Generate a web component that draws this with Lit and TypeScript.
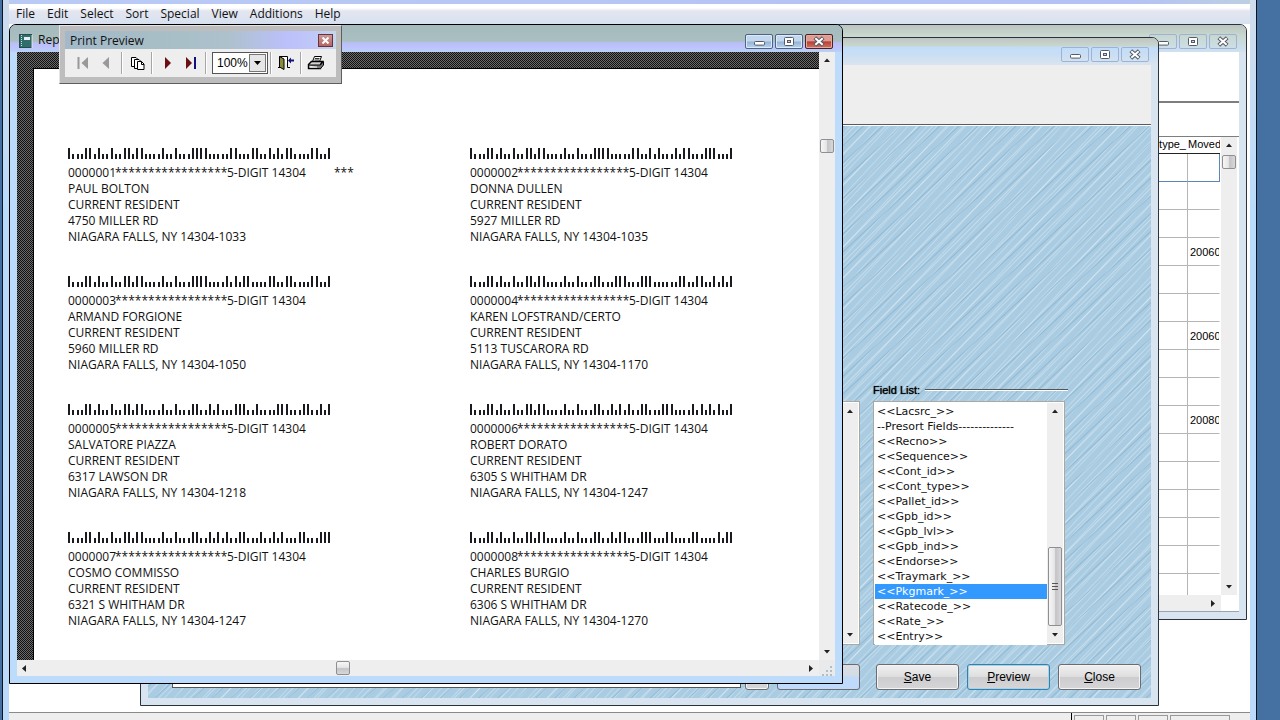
import { LitElement, html, css, svg, nothing } from "lit";
import { customElement, property } from "lit/decorators.js";
import { classMap } from "lit/directives/class-map.js";
import { styleMap } from "lit/directives/style-map.js";

/* ---------- Window caption buttons ---------- */

@customElement("caption-buttons")
class CaptionButtons extends LitElement {
  @property({ type: Boolean }) active = false;

  static styles = css`
    :host { display: flex; gap: 2px; }
    .btn {
      width: 28px; height: 15px; padding: 0; box-sizing: border-box;
      display: flex; align-items: center; justify-content: center;
      border: 1px solid #9db3d6; border-radius: 2px;
      background: transparent;
    }
    .active {
      border-color: #4d6480;
      background: linear-gradient(#c3d8ee 0 48%, #94b2d2 52%, #b5d3f2);
      box-shadow: inset 0 0 0 1px #dbe9f8;
    }
    .close {
      border-color: #4d2027;
      background: linear-gradient(#dd9d92 0 46%, #b93f32 52%, #cf7463);
      box-shadow: inset 0 0 0 1px #e3aaa2;
    }
  `;

  render() {
    const kind = (close: boolean) => classMap({ btn: true, active: this.active && !close, close: this.active && close });
    return html`
      <button class=${kind(false)} aria-label="Minimize">
        <svg width="14" height="11"><rect x="2.5" y="5.5" width="10" height="3.6" rx="1" fill="#fff" stroke="#545a66" /></svg>
      </button>
      <button class=${kind(false)} aria-label="Maximize">
        <svg width="14" height="11">
          <rect x="2.5" y="1.5" width="9" height="8" rx="1" fill="#fff" stroke="#545a66" />
          <rect x="5.5" y="4.5" width="3" height="2" fill="#c3d3e8" stroke="#545a66" />
        </svg>
      </button>
      <button class=${kind(true)} aria-label="Close">
        <svg width="14" height="11">
          <path d="M2.8 1.8L11.2 9.2M11.2 1.8L2.8 9.2" stroke="#545a66" stroke-width="4" />
          <path d="M3.3 2.3L10.7 8.7M10.7 2.3L3.3 8.7" stroke="#fff" stroke-width="2" />
        </svg>
      </button>
    `;
  }
}

/* ---------- Scroll bar ---------- */

@customElement("scroll-strip")
class ScrollStrip extends LitElement {
  @property({ type: Boolean, reflect: true }) horizontal = false;
  @property({ type: Boolean }) grip = false;
  /** Share of the free track that lies before the thumb, 0 to 1; negative hides the thumb. */
  @property({ type: Number }) position = -1;
  @property({ type: Number }) thumb = 14;

  static styles = css`
    :host { display: flex; flex-direction: column; background: #eeeeee; width: 16px; }
    :host([horizontal]) { flex-direction: row; width: auto; height: 16px; }
    .arrow {
      flex: none; width: 16px; height: 16px; padding: 0; border: 0; background: none;
      display: flex; align-items: center; justify-content: center;
    }
    .gap { flex: 1 1 0; }
    .thumb {
      flex: none; box-sizing: border-box; border: 1px solid #8f8f93; border-radius: 2px;
      background: linear-gradient(90deg, #f6f6f6, #e6e6e6 45%, #c4c4c6 55%, #d8d8da);
      display: flex; align-items: center; justify-content: center;
      margin: 0 1px;
    }
    :host([horizontal]) .thumb {
      margin: 1px 0;
      background: linear-gradient(#f6f6f6, #e6e6e6 45%, #c4c4c6 55%, #d8d8da);
    }
  `;

  private arrow(d: string, label: string) {
    return html`<button class="arrow" aria-label=${label}>
      <svg width="8" height="8"><path d=${d} fill="#222" /></svg>
    </button>`;
  }

  render() {
    const size = this.horizontal ? { width: `${this.thumb}px` } : { height: `${this.thumb}px` };
    return html`
      ${this.horizontal ? this.arrow("M5 1V8L1 4.5Z", "Scroll left") : this.arrow("M1 6H7L4 2.5Z", "Scroll up")}
      <span class="gap" style=${styleMap({ flexGrow: String(Math.max(0.0001, this.position)) })}></span>
      ${this.position < 0
        ? nothing
        : html`<span class="thumb" style=${styleMap(size)}>
            ${this.grip
              ? html`<svg width="7" height="8"><path d="M0 .5H6M0 3.5H6M0 6.5H6" stroke="#555" /></svg>`
              : nothing}
          </span>`}
      <span class="gap" style=${styleMap({ flexGrow: String(1 - Math.max(0, this.position)) })}></span>
      ${this.horizontal ? this.arrow("M2 1V8L6 4.5Z", "Scroll right") : this.arrow("M1 2H7L4 5.5Z", "Scroll down")}
    `;
  }
}

/* ---------- POSTNET bar code ---------- */

const POSTNET = ["11000", "00011", "00101", "00110", "01001", "01010", "01100", "10001", "10010", "10100"];

function postnetBars(digits: string): string {
  const sum = [...digits].reduce((total, d) => total + Number(d), 0);
  const check = (10 - (sum % 10)) % 10;
  return "1" + [...digits, check].map((d) => POSTNET[Number(d)]).join("") + "1";
}

@customElement("postnet-code")
class PostnetCode extends LitElement {
  @property() digits = "";

  static styles = css`
    :host { display: block; height: 11px; }
    .bars { display: block; }
  `;

  render() {
    return html`<svg class="bars" width="264" height="11" shape-rendering="crispEdges" role="img" aria-label="Postal bar code">
      ${[...postnetBars(this.digits)].map(
        (bar, i) => svg`<rect x=${Math.round(i * 4.27)} y=${bar === "1" ? 0 : 6} width="2" height=${bar === "1" ? 11 : 5} fill="#1c1a20" />`,
      )}
    </svg>`;
  }
}

/* ---------- Print preview tool window ---------- */

@customElement("preview-toolbar")
class PreviewToolbar extends LitElement {
  static styles = css`
    :host {
      display: block; box-sizing: border-box; padding: 5px;
      background: #bdbdbd; border: 1px solid; border-color: #e4e4e4 #5e5e5e #5e5e5e #e4e4e4;
      font: 12px/17px "Open Sans", "Noto Sans", sans-serif; color: #111;
    }
    .title {
      display: flex; align-items: center; justify-content: space-between; height: 18px;
      padding: 0 3px 0 5px;
      background: linear-gradient(90deg, #a3b9c9, #a7bec6 35%, #adc1cc 60%, #bcc0fb 82%, #c0c8f8 92%, #c4d8ee);
    }
    .name { margin: 0; font: inherit; }
    .close {
      width: 15px; height: 13px; padding: 0; box-sizing: border-box; border: 1px solid #6b3138;
      background: linear-gradient(#c99a9b, #b56662); display: flex; align-items: center; justify-content: center;
    }
    .tools { display: flex; align-items: center; height: 28px; background: #eeeeee; padding-left: 6px; }
    .tool { width: 24px; height: 24px; padding: 0; border: 0; background: none; display: flex; align-items: center; justify-content: center; }
    .sep { width: 1px; height: 22px; background: #a6a6a6; border-right: 1px solid #fff; margin: 0 2px; }
    .zoom { display: flex; align-items: center; box-sizing: border-box; width: 56px; height: 22px; border: 1px solid #555; background: #fff; margin-left: 3px; position: relative; }
    .pick {
      appearance: none; width: 100%; height: 20px; border: 0; padding: 0 0 0 4px; background: none;
      font: 12px/18px "Liberation Sans", Arial, sans-serif; color: #000;
    }
    .drop { position: absolute; right: 1px; top: 1px; width: 15px; height: 16px; border: 1px solid #777; background: #e6e6e6; display: flex; align-items: center; justify-content: center; pointer-events: none; }
  `;

  render() {
    return html`
      <div class="title">
        <h2 class="name">Print Preview</h2>
        <button class="close" aria-label="Close">
          <svg width="9" height="7"><path d="M1.5 .5L7.5 6.5M7.5 .5L1.5 6.5" stroke="#fff" stroke-width="2" /></svg>
        </button>
      </div>
      <div class="tools">
        <button class="tool" aria-label="First page">
          <svg width="12" height="12"><path d="M1.5 0V12" stroke="#999" stroke-width="2" /><path d="M11 0V12L4.500 6Z" fill="#999" /></svg>
        </button>
        <button class="tool" aria-label="Previous page">
          <svg width="12" height="12"><path d="M8 0V12L1.500 6Z" fill="#999" /></svg>
        </button>
        <span class="sep"></span>
        <button class="tool" aria-label="Go to page">
          <svg width="15" height="15">
            <path d="M1.500 1.500H6L8.500 4V10.500H1.500Z" fill="#fff" stroke="#000" />
            <path d="M4.500 3.500H9L11.500 6V12.500H4.500Z" fill="#fff" stroke="#000" />
            <path d="M7.500 5.500H11.500L14 8V13.500H7.500Z" fill="#fff" stroke="#000" />
            <path d="M11.500 5.500V8.500H14" fill="none" stroke="#000" />
          </svg>
        </button>
        <span class="sep"></span>
        <button class="tool" aria-label="Next page">
          <svg width="12" height="12"><path d="M4 0V12L10 6Z" fill="#6b0e12" /></svg>
        </button>
        <button class="tool" aria-label="Last page">
          <svg width="12" height="12"><path d="M1 0V12L7 6Z" fill="#6b0e12" /><path d="M10 0V12" stroke="#11117c" stroke-width="2" /></svg>
        </button>
        <span class="sep"></span>
        <span class="zoom">
          <select class="pick" aria-label="Zoom"><option>100%</option></select>
          <span class="drop"><svg width="7" height="4"><path d="M0 0H7L3.500 4Z" /></svg></span>
        </span>
        <span class="sep"></span>
        <button class="tool" aria-label="Close preview">
          <svg width="17" height="16">
            <path d="M1.500 1.500H9.500V12.500H12" fill="#fff" stroke="#000" />
            <path d="M1.500 1.500L6 4V14.500L1.500 12Z" fill="#8a8a3a" stroke="#000" />
            <path d="M0 12.500H2" stroke="#000" />
            <path d="M10 5.500L13 2.500V8.500ZM12 4.500H16V6.500H12Z" fill="#14147c" />
          </svg>
        </button>
        <span class="sep"></span>
        <button class="tool" aria-label="Print">
          <svg width="18" height="16">
            <path d="M5.500 6.500L7.500 1.500H14.500L12.500 6.500Z" fill="#fff" stroke="#000" />
            <path d="M8 3.500H12.500M7.500 5H12" stroke="#000" stroke-width=".8" />
            <path d="M1.500 9.500L4.500 6.500H15.500L13.500 9.500V13.500H1.500Z" fill="#d2d2d2" stroke="#000" stroke-width="1.400" />
            <path d="M1.500 10H13.500L16.500 6.500V10L13.500 13.500" fill="#777" stroke="#000" />
            <path d="M3 12H10" stroke="#fff" />
          </svg>
        </button>
      </div>
    `;
  }
}

/* ---------- Application ---------- */

const MENUS = ["File", "Edit", "Select", "Sort", "Special", "View", "Additions", "Help"];

interface Label { no: string; tail?: string; name: string; street: string; plus4: string; point: string }

const LABELS: Label[] = [
  { no: "0000001", tail: "***", name: "PAUL BOLTON", street: "4750 MILLER RD", plus4: "1033", point: "50" },
  { no: "0000002", name: "DONNA DULLEN", street: "5927 MILLER RD", plus4: "1035", point: "27" },
  { no: "0000003", name: "ARMAND FORGIONE", street: "5960 MILLER RD", plus4: "1050", point: "60" },
  { no: "0000004", name: "KAREN LOFSTRAND/CERTO", street: "5113 TUSCARORA RD", plus4: "1170", point: "13" },
  { no: "0000005", name: "SALVATORE PIAZZA", street: "6317 LAWSON DR", plus4: "1218", point: "17" },
  { no: "0000006", name: "ROBERT DORATO", street: "6305 S WHITHAM DR", plus4: "1247", point: "05" },
  { no: "0000007", name: "COSMO COMMISSO", street: "6321 S WHITHAM DR", plus4: "1247", point: "21" },
  { no: "0000008", name: "CHARLES BURGIO", street: "6306 S WHITHAM DR", plus4: "1270", point: "06" },
];

const FIELDS = [
  "<<Lacsrc_>>", "--Presort Fields--------------", "<<Recno>>", "<<Sequence>>", "<<Cont_id>>", "<<Cont_type>>",
  "<<Pallet_id>>", "<<Gpb_id>>", "<<Gpb_lvl>>", "<<Gpb_ind>>", "<<Endorse>>", "<<Traymark_>>", "<<Pkgmark_>>",
  "<<Ratecode_>>", "<<Rate_>>", "<<Entry>>",
];

const MOVED = ["", "", "", "200601", "", "", "200601", "", "", "200801", "", "", "", "", "", ""];

@customElement("app-root")
class AppRoot extends LitElement {
  static styles = css`
    :host { display: block; height: 100vh; overflow: hidden; background: #4470a2; font: 12px/16px "Open Sans", "Noto Sans", sans-serif; color: #111; }
    .app {
      box-sizing: border-box; height: 100%; margin: 0 23px 0 2px; position: relative;
      display: flex; flex-direction: column;
      border: solid #0b1420; border-width: 0 1px; padding: 0 6px;
      background: linear-gradient(#d0dced, #b9dcfb 30%, #bcdbfb);
    }
    .strip { flex: none; height: 4px; background: linear-gradient(90deg, #b9cbf5, #b3c1f5 90%, #bcd0e2); }
    .menu { flex: none; display: flex; height: 20px; padding-left: 7px; gap: 12px; background: linear-gradient(#fff 0 20%, #e4e6f0 35%, #d7e1f0); }
    .item { color: #111; text-decoration: none; line-height: 20px; }
    .client { flex: 1; background: #fff; }
    .status { flex: none; display: flex; justify-content: flex-end; gap: 2px; height: 7px; border-top: 1px solid #8a8a8a; background: #eee; }
    .mark { width: 1px; background: #000; }
    .cell { box-sizing: border-box; width: 30px; margin-top: 2px; border: 1px solid #999; border-bottom: 0; }
    .cell.wide { width: 60px; margin-right: 20px; }

    .win {
      position: absolute; box-sizing: border-box; display: flex; flex-direction: column;
      border: 1px solid #2b323c; border-radius: 7px 7px 0 0; padding: 0 7px 7px;
      background: #d9e4f1;
    }
    .bar { flex: none; display: flex; justify-content: space-between; height: 27px; margin: 0 -7px; padding: 0 9px; box-sizing: border-box; border-radius: 6px 6px 0 0; }
    .ctl { margin-top: 9px; height: 15px; }

    /* data table behind the other windows */
    .back { left: 440px; top: 24px; width: 804px; height: 596px; }
    .back .bar { background: linear-gradient(#bcc4c0, #c8d8cf 40%, #cfe0f2); justify-content: flex-end; }
    .sheet { flex: 1; min-height: 0; display: flex; flex-direction: column; background: #fff; border-bottom: 1px solid #97a4b5; }
    .band { flex: none; height: 49px; border-bottom: 2px solid #7e7e7e; }
    .band.low { height: 33px; border-bottom-width: 1px; }
    .gridrow { flex: 1; min-height: 0; display: flex; padding-right: 2px; }
    .gridbox { flex: 1; min-width: 0; overflow: hidden; margin-right: 1px; }
    .data { width: 100%; table-layout: fixed; border-collapse: separate; border-spacing: 0; font: 11px/16px "Liberation Sans", Arial, sans-serif; color: #000; }
    .data th { height: 16px; padding: 0; font-weight: 400; line-height: 14px; text-align: right; vertical-align: top; border-bottom: 1px solid #222; white-space: nowrap; }
    .data td { height: 27px; padding: 0 0 0 2px; border-bottom: 1px solid #b5b5b5; border-right: 1px solid #b5b5b5; overflow: hidden; white-space: nowrap; }
    .data th:nth-child(2) { padding-right: 2px; }
    .data td:last-child { border-right-color: #fff; }
    .data .cur td { border-bottom-color: #5b87b8; }
    .data .cur td:last-child { border-right-color: #5b87b8; }
    .c-type { width: 32px; }
    .c-moved { width: 32px; }
    .foot { flex: none; display: flex; height: 16px; }
    .foot scroll-strip { flex: 1; }
    .corner { width: 18px; background: #fff; }

    /* label designer */
    .design { left: 137px; top: 37px; width: 1019px; height: 669px; }
    .design .bar { background: linear-gradient(#bfc5c2, #c8d6cf 28%, #c3ddf9 36%, #c9def4 60%, #d9e4ee); justify-content: flex-end; }
    .head { flex: none; height: 59px; background: #eee; border-bottom: 1px solid #555c66; }
    .body {
      flex: 1; min-height: 0; display: flex; flex-direction: column; justify-content: flex-end; border-top: 1px solid #fff;
      background:
        repeating-linear-gradient(135deg, #ffffff00 0 4px, #ffffff55 5px, #ffffff00 6px 11px),
        repeating-linear-gradient(137deg, #6f9dbd00 0 6px, #6f9dbd66 7px, #6f9dbd00 8px 13px),
        repeating-linear-gradient(133deg, #ffffff00 0 2px, #ffffff44 3px, #ffffff00 4px 7px),
        #a9cce2;
    }
    .lists { display: flex; align-items: flex-end; justify-content: flex-end; gap: 13px; padding-right: 83px; }
    .group { width: 195px; }
    .legend { display: flex; align-items: center; gap: 5px; height: 22px; font: 11px/22px "Liberation Sans", Arial, sans-serif; color: #000; text-shadow: 0 0 1px #000; white-space: nowrap; }
    .legend::after { content: ""; flex: 1; height: 1px; background: #555; border-bottom: 1px solid #fff; }
    .listbox { display: flex; box-sizing: border-box; width: 192px; height: 244px; border: 1px solid #aaa8a0; background: #fff; padding: 1px; }
    .listbox.left { width: 260px; justify-content: flex-end; }
    .fields {
      flex: 1; min-width: 0; height: 242px; border: 0; padding: 1px 0 0; margin: 0; outline: 0; background: #fff;
      overflow: hidden; scrollbar-width: none; border-radius: 0;
      font: 11px/15px "DejaVu Sans", Verdana, sans-serif; color: #111;
    }
    .fields option { box-sizing: border-box; height: 15px; min-height: 15px; padding: 1px 0 0 2px; line-height: 14px; }
    .fields option:checked { background: linear-gradient(#3399ff, #3399ff); color: #fff; }
    .actions { display: flex; align-items: stretch; gap: 8px; height: 26px; margin: 19px 10px 8px 24px; }
    .entry { flex: 1; min-width: 0; box-sizing: border-box; border: 1px solid #555; background: #fff; margin-right: -4px; border-radius: 0; height: 24px; }
    .push {
      width: 83px; box-sizing: border-box; padding: 0; border: 1px solid #6c6c70; border-radius: 3px;
      background: linear-gradient(#f0f0f0, #dedee0 48%, #cdcdcf 52%, #d6d6d8);
      box-shadow: inset 0 0 0 1px #f4f4f4;
      font: 12px/16px "Liberation Sans", Arial, sans-serif; color: #000;
    }
    .push.small { width: 24px; }
    .push.blue { background: linear-gradient(#dcdfe4, #d3dbe5 45%, #bfdafa 52%); margin-right: 8px; box-shadow: none; }
    .push.default { border-color: #3d7da4; box-shadow: inset 0 0 0 1px #9fd4ef; margin: 0; }

    /* report preview */
    .report { left: 6px; top: 24px; width: 834px; height: 660px; border-color: #000; background: #bddbfb; }
    .report .bar { background: linear-gradient(#a5babd, #a9bfc0 60%, #b9bff8 66%, #bfc3fb 85%, #b5d4f4); }
    .caption { display: flex; align-items: center; gap: 5px; margin: 3px 0 0; font: inherit; }
    .view { flex: 1; min-height: 0; display: grid; grid-template: minmax(0, 1fr) 16px / minmax(0, 1fr) 16px; }
    .desk { overflow: hidden; padding: 16px 0 0 16px; background: repeating-conic-gradient(#111 0 25%, #6a6a6a 0 50%) 0 0 / 2px 2px; }
    .page { height: 100%; box-sizing: border-box; padding: 75px 34px 0; border: solid #000; border-width: 1px 0 0 1px; background: #fff; }
    .labels { display: grid; grid-template-columns: 402px 1fr; grid-auto-rows: 128px; margin: 0; padding: 0; list-style: none; font: 12px/16px "Open Sans", "Noto Sans", sans-serif; color: #111; }
    .label { white-space: nowrap; }
    .code { padding: 4px 0 6px; }
    .sort { display: grid; grid-template-columns: 47px 112px 107px auto; }
    .resize { background: #e8eaec; display: flex; align-items: flex-end; justify-content: flex-end; }
    .tools { position: absolute; left: 56px; top: 25px; width: 283px; height: 59px; padding: 5px; }
  `;

  private backWindow() {
    return html`<section class="win back" aria-label="Table">
      <div class="bar"><caption-buttons class="ctl"></caption-buttons></div>
      <div class="sheet">
        <div class="band"></div>
        <div class="band low"></div>
        <div class="gridrow">
          <div class="gridbox">
            <table class="data">
              <colgroup><col /><col class="c-type" /><col class="c-moved" /></colgroup>
              <thead><tr><th></th><th>type_</th><th>Moved</th></tr></thead>
              <tbody>
                ${MOVED.map((m, i) => html`<tr class=${i ? "" : "cur"}><td></td><td></td><td>${m}</td></tr>`)}
              </tbody>
            </table>
          </div>
          <scroll-strip .position=${0.005}></scroll-strip>
        </div>
        <div class="foot"><scroll-strip horizontal></scroll-strip><span class="corner"></span></div>
      </div>
    </section>`;
  }

  private designWindow() {
    return html`<section class="win design" aria-label="Label designer">
      <div class="bar"><caption-buttons class="ctl"></caption-buttons></div>
      <div class="head"></div>
      <div class="body">
        <div class="lists">
          <div class="listbox left"><scroll-strip></scroll-strip></div>
          <div class="group">
            <label class="legend" for="fields">Field List:</label>
            <div class="listbox">
              <select id="fields" class="fields" size="16">
                ${FIELDS.map((f) => html`<option ?selected=${f === "<<Pkgmark_>>"}>${f}</option>`)}
              </select>
              <scroll-strip grip .thumb=${79} .position=${0.995}></scroll-strip>
            </div>
          </div>
        </div>
        <div class="actions">
          <input class="entry" aria-label="Expression" />
          <button class="push small" aria-label="Browse"></button>
          <button class="push blue" aria-label="Insert"></button>
          <button class="push"><u>S</u>ave</button>
          <button class="push default"><u>P</u>review</button>
          <button class="push"><u>C</u>lose</button>
        </div>
      </div>
    </section>`;
  }

  private reportWindow() {
    return html`<section class="win report" aria-label="Report">
      <div class="bar">
        <h1 class="caption">
          <svg width="14" height="15">
            <rect x=".5" y="1.500" width="12" height="13" fill="#2f6e6c" stroke="#244c50" />
            <path d="M2.500 2V14" stroke="#cfe0dc" stroke-dasharray="1 1" />
            <rect x="5" y="4" width="6" height="3" fill="#e6f0ee" />
            <path d="M13 2V15" stroke="#e8e8e8" />
          </svg>
          Report
        </h1>
        <caption-buttons class="ctl" active></caption-buttons>
      </div>
      <div class="view">
        <div class="desk">
          <div class="page">
            <ul class="labels">
              ${LABELS.map(
                (l) => html`<li class="label">
                  <div class="code"><postnet-code .digits=${"14304" + l.plus4 + l.point}></postnet-code></div>
                  <div class="sort">
                    <span>${l.no}</span><span>${"*".repeat(17)}</span><span>5-DIGIT 14304</span><span>${l.tail ?? ""}</span>
                  </div>
                  <div>${l.name}</div>
                  <div>CURRENT RESIDENT</div>
                  <div>${l.street}</div>
                  <div>NIAGARA FALLS, NY 14304-${l.plus4}</div>
                </li>`,
              )}
            </ul>
          </div>
        </div>
        <scroll-strip .position=${0.127}></scroll-strip>
        <scroll-strip horizontal .position=${0.401}></scroll-strip>
        <span class="resize">
          <svg width="14" height="14"><path d="M9 5h2M5 9h2M9 9h2M1 13h2M5 13h2M9 13h2" stroke="#b5bcc4" stroke-width="2" stroke-dasharray="2 2" /></svg>
        </span>
      </div>
    </section>`;
  }

  render() {
    return html`
      <main class="app">
        <div class="strip"></div>
        <nav class="menu">${MENUS.map((m) => html`<a class="item" href="#">${m}</a>`)}</nav>
        <div class="client"></div>
        <footer class="status">
          <span class="mark"></span><span class="cell"></span><span class="cell"></span><span class="cell"></span>
          <span class="cell wide"></span>
        </footer>
        ${this.backWindow()} ${this.designWindow()} ${this.reportWindow()}
        <preview-toolbar class="tools"></preview-toolbar>
      </main>
    `;
  }
}
